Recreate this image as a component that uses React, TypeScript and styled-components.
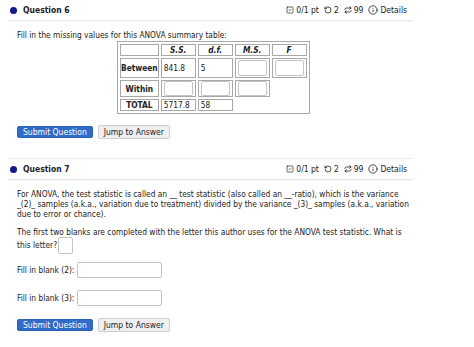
import React from "react";
import styled, { createGlobalStyle } from "styled-components";
import { SquareCheck, RotateCcw, Repeat, Info } from "lucide-react";

const GlobalStyle = createGlobalStyle`
  html, body {
    margin: 0;
    padding: 0;
    background: #ffffff;
  }
  body {
    font-family: "DejaVu Sans Condensed", "DejaVu Sans", sans-serif;
    font-size: 8.3px;
    color: #222222;
  }
`;

const Page = styled.div`
  width: 405px;
  padding-left: 8px;
`;

const Card = styled.section<{ $top?: number }>`
  margin-top: ${(p) => p.$top ?? 0}px;
  border-top: ${(p) => (p.$top ? "1px solid #ececec" : "none")};
`;

const Header = styled.div`
  display: flex;
  align-items: center;
  justify-content: space-between;
  height: 20px;
  padding: 0 6px 0 2px;
  border-bottom: 1px solid #e8e8e8;
  box-shadow: 0 1px 1px rgba(0, 0, 0, 0.03);
`;

const Title = styled.div`
  display: flex;
  align-items: center;
  gap: 6px;
  font-weight: bold;
  font-size: 8.5px;
`;

const Dot = styled.span`
  width: 7px;
  height: 7px;
  border-radius: 50%;
  background: #13198a;
`;

const Meta = styled.div`
  display: flex;
  align-items: center;
  gap: 2px;
  font-size: 8.5px;

  svg {
    flex: none;
  }
`;

const MetaItem = styled.span`
  margin-right: 3px;
`;

const Body = styled.div<{ $top: number }>`
  padding: ${(p) => p.$top}px 0 0 9px;
`;

const Para = styled.p<{ $gap?: number }>`
  margin: 0 0 ${(p) => p.$gap ?? 8}px 0;
  line-height: 10px;
`;

const Table = styled.table`
  margin: 0 0 0 100px;
  border: 1px solid #a8a8a8;
  border-spacing: 2px;
  border-collapse: separate;
  table-layout: fixed;
`;

const Th = styled.th<{ $w: number }>`
  box-sizing: border-box;
  border: 1px solid #a8a8a8;
  font-style: italic;
  font-weight: bold;
  width: ${(p) => p.$w}px;
  height: 12px;
  padding: 0;
  text-align: center;
`;

const RowLabel = styled.td<{ $h: number }>`
  box-sizing: border-box;
  border: 1px solid #a8a8a8;
  font-weight: bold;
  text-align: center;
  height: ${(p) => p.$h}px;
  padding: 0;
`;

const Td = styled.td<{ $empty?: boolean }>`
  box-sizing: border-box;
  border: ${(p) => (p.$empty ? "none" : "1px solid #a8a8a8")};
  padding: 0 2px;
`;

const CellInput = styled.input<{ $h: number }>`
  box-sizing: border-box;
  display: block;
  width: 29px;
  height: ${(p) => p.$h}px;
  border: 1px solid #c4c4c4;
  border-radius: 2px;
  background: #fff;
  margin: 0;
  padding: 0;
`;

const Actions = styled.div<{ $top: number }>`
  display: flex;
  align-items: center;
  gap: 5px;
  margin-top: ${(p) => p.$top}px;
`;

const PrimaryButton = styled.button`
  font-family: inherit;
  font-size: 8.5px;
  color: #fff;
  background: #2f6bc8;
  border: 1px solid #2a62b8;
  border-radius: 2px;
  height: 12px;
  padding: 0 5px;
  line-height: 10px;
`;

const SecondaryButton = styled.button`
  font-family: inherit;
  font-size: 8.5px;
  color: #222;
  background: #efefef;
  border: 1px solid #d0d0d0;
  border-radius: 2px;
  height: 14px;
  padding: 0 5px;
`;

const InlineBox = styled.input`
  box-sizing: border-box;
  width: 15px;
  height: 17px;
  border: 1px solid #c4c4c4;
  border-radius: 2px;
  vertical-align: middle;
  margin: 0 0 0 1px;
  padding: 0;
`;

const BlankRow = styled.div`
  display: flex;
  align-items: center;
  gap: 3px;
  margin-bottom: 12px;
`;

const BlankInput = styled.input`
  box-sizing: border-box;
  width: 85px;
  height: 16px;
  border: 1px solid #c4c4c4;
  border-radius: 2px;
  margin: 0;
  padding: 0;
`;

const HeaderBar: React.FC<{ n: number }> = ({ n }) => (
  <Header>
    <Title>
      <Dot />
      Question {n}
    </Title>
    <Meta>
      <SquareCheck size={8} strokeWidth={2} />
      <MetaItem>0/1 pt</MetaItem>
      <RotateCcw size={8} strokeWidth={2.4} />
      <MetaItem>2</MetaItem>
      <Repeat size={8} strokeWidth={2.4} />
      <MetaItem>99</MetaItem>
      <Info size={10} strokeWidth={2} />
      <span>Details</span>
    </Meta>
  </Header>
);

export default function App() {
  return (
    <Page>
      <GlobalStyle />
      <Card>
        <HeaderBar n={6} />
        <Body $top={9}>
          <Para $gap={1}>Fill in the missing values for this ANOVA summary table:</Para>
          <Table>
            <thead>
              <tr>
                <Th $w={38} />
                <Th $w={34}>S.S.</Th>
                <Th $w={34}>d.f.</Th>
                <Th $w={34}>M.S.</Th>
                <Th $w={34}>F</Th>
              </tr>
            </thead>
            <tbody>
              <tr>
                <RowLabel $h={20}>Between</RowLabel>
                <Td>841.8</Td>
                <Td>5</Td>
                <Td>
                  <CellInput $h={16} />
                </Td>
                <Td>
                  <CellInput $h={16} />
                </Td>
              </tr>
              <tr>
                <RowLabel $h={17}>Within</RowLabel>
                <Td>
                  <CellInput $h={15} />
                </Td>
                <Td>
                  <CellInput $h={15} />
                </Td>
                <Td>
                  <CellInput $h={15} />
                </Td>
                <Td $empty />
              </tr>
              <tr>
                <RowLabel $h={12}>TOTAL</RowLabel>
                <Td>5717.8</Td>
                <Td>58</Td>
                <Td $empty />
                <Td $empty />
              </tr>
            </tbody>
          </Table>
          <Actions $top={11}>
            <PrimaryButton>Submit Question</PrimaryButton>
            <SecondaryButton>Jump to Answer</SecondaryButton>
          </Actions>
        </Body>
      </Card>
      <Card $top={19}>
        <HeaderBar n={7} />
        <Body $top={9}>
          <Para>
            For ANOVA, the test statistic is called an __ test statistic (also called an __-ratio), which
            is the variance _(2)_ samples (a.k.a., variation due to treatment) divided by the variance
            _(3)_ samples (a.k.a., variation due to error or chance).
          </Para>
          <Para>
            The first two blanks are completed with the letter this author uses for the ANOVA test
            statistic. What is this letter?
            <InlineBox />
          </Para>
          <BlankRow>
            Fill in blank (2): <BlankInput />
          </BlankRow>
          <BlankRow>
            Fill in blank (3): <BlankInput />
          </BlankRow>
          <Actions $top={0}>
            <PrimaryButton>Submit Question</PrimaryButton>
            <SecondaryButton>Jump to Answer</SecondaryButton>
          </Actions>
        </Body>
      </Card>
    </Page>
  );
}
